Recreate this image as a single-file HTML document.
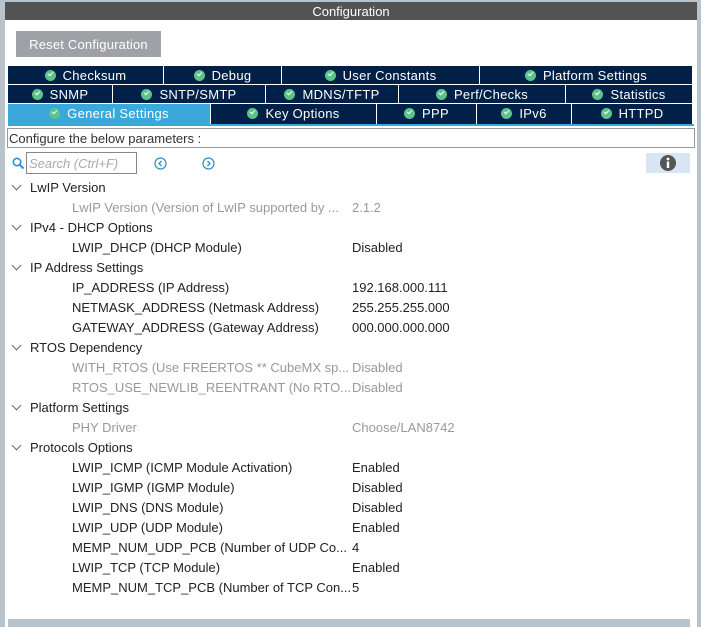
<!DOCTYPE html>
<html><head><style>
*{margin:0;padding:0;box-sizing:border-box}
body{width:701px;height:627px;background:#b9c3cb;position:relative;overflow:hidden;font-family:"Liberation Sans",Arial,sans-serif;font-size:13px;color:#222}
.abs{position:absolute}
#panel{left:5px;top:2px;width:692px;height:625px;background:#fff}
#title{left:5px;top:2px;width:692px;height:18px;background:#535353;color:#fff;text-align:center;line-height:19px;font-size:13px}
#reset{left:16px;top:31px;width:145px;height:26px;background:#9ea2a6;color:#fff;line-height:27px;text-align:center;font-size:13px;letter-spacing:0.2px}
.tab{position:absolute;background:#002047;color:#fff;text-align:center;font-size:13px;white-space:nowrap;letter-spacing:0.3px}
.tab.act{background:#3aa8db}
.ck{display:inline-block;width:11px;height:11px;border-radius:50%;background:#5bc48a;position:relative;vertical-align:-1px;margin-right:7px}
.ck:after{content:"";position:absolute;left:3px;top:2px;width:4px;height:2px;border-left:1.6px solid #fff;border-bottom:1.6px solid #fff;transform:rotate(-45deg)}
.row{position:absolute;height:20px;line-height:22px;white-space:nowrap}
.g{left:30px}
.l{left:72px}
.v{left:352px}
.d{color:#999}
.chev{position:absolute;left:13px;width:7px;height:7px;border-right:1px solid #666;border-bottom:1px solid #666;transform:rotate(45deg)}
</style></head><body>
<div class="abs" id="panel"></div>
<div class="abs" id="title">Configuration</div>
<div class="abs" id="reset">Reset Configuration</div>

<div class="tab" style="left:8px;top:66px;width:155px;height:18px;line-height:19px"><span class="ck"></span>Checksum</div>
<div class="tab" style="left:164px;top:66px;width:117px;height:18px;line-height:19px"><span class="ck"></span>Debug</div>
<div class="tab" style="left:282px;top:66px;width:197px;height:18px;line-height:19px"><span class="ck"></span>User Constants</div>
<div class="tab" style="left:480px;top:66px;width:212px;height:18px;line-height:19px"><span class="ck"></span>Platform Settings</div>

<div class="tab" style="left:8px;top:85px;width:104px;height:18px;line-height:19px"><span class="ck"></span>SNMP</div>
<div class="tab" style="left:113px;top:85px;width:152px;height:18px;line-height:19px"><span class="ck"></span>SNTP/SMTP</div>
<div class="tab" style="left:266px;top:85px;width:132px;height:18px;line-height:19px"><span class="ck"></span>MDNS/TFTP</div>
<div class="tab" style="left:399px;top:85px;width:166px;height:18px;line-height:19px"><span class="ck"></span>Perf/Checks</div>
<div class="tab" style="left:566px;top:85px;width:126px;height:18px;line-height:19px"><span class="ck"></span>Statistics</div>

<div class="tab act" style="left:8px;top:104px;width:202px;height:20px;line-height:20px"><span class="ck"></span>General Settings</div>
<div class="tab" style="left:211px;top:104px;width:165px;height:20px;line-height:20px"><span class="ck"></span>Key Options</div>
<div class="tab" style="left:377px;top:104px;width:99px;height:20px;line-height:20px"><span class="ck"></span>PPP</div>
<div class="tab" style="left:477px;top:104px;width:94px;height:20px;line-height:20px"><span class="ck"></span>IPv6</div>
<div class="tab" style="left:572px;top:104px;width:120px;height:20px;line-height:20px"><span class="ck"></span>HTTPD</div>
<div class="abs" style="left:8px;top:124px;width:686px;height:2px;background:#3aa8db"></div>

<div class="abs" style="left:7px;top:128px;width:688px;height:20px;border:1px solid #999;line-height:19px;padding-left:1px;color:#333">Configure the below parameters :</div>

<svg class="abs" style="left:12px;top:157px" width="13" height="13" viewBox="0 0 13 13"><circle cx="5" cy="5" r="3.7" fill="none" stroke="#2a8fd4" stroke-width="1.6"/><line x1="7.6" y1="7.6" x2="11.5" y2="11.5" stroke="#2a8fd4" stroke-width="2"/></svg>
<div class="abs" style="left:26px;top:152px;width:111px;height:22px;border:1px solid #888;line-height:21px;padding-left:2px;color:#aaa;font-style:italic">Search (Ctrl+F)</div>
<svg class="abs" style="left:154px;top:157px" width="13" height="13"><circle cx="6.5" cy="6.5" r="5.5" fill="none" stroke="#2a8fd4" stroke-width="1.2"/><path d="M7.5 4 L5 6.5 L7.5 9" fill="none" stroke="#2a8fd4" stroke-width="1.3"/></svg>
<div class="abs" style="left:646px;top:153px;width:44px;height:20px;background:#d8e6f3"></div>
<svg class="abs" style="left:202px;top:157px" width="13" height="13"><circle cx="6.5" cy="6.5" r="5.5" fill="none" stroke="#2a8fd4" stroke-width="1.2"/><path d="M5.5 4 L8 6.5 L5.5 9" fill="none" stroke="#2a8fd4" stroke-width="1.3"/></svg>
<svg class="abs" style="left:659px;top:154px" width="18" height="18"><circle cx="9" cy="9" r="8" fill="#555"/><circle cx="9" cy="5" r="1.4" fill="#fff"/><rect x="7.8" y="7.5" width="2.4" height="6.5" fill="#fff"/></svg>

<div class="row" style="left:0;top:177px;width:0"><span class="chev" style="top:5px"></span></div>
<div class="row g" style="top:177px">LwIP Version</div>
<div class="row l d" style="top:197px">LwIP Version (Version of LwIP supported by ...</div><div class="row v d" style="top:197px">2.1.2</div>
<div class="row" style="left:0;top:217px"><span class="chev" style="top:5px"></span></div>
<div class="row g" style="top:217px">IPv4 - DHCP Options</div>
<div class="row l" style="top:237px">LWIP_DHCP (DHCP Module)</div><div class="row v" style="top:237px">Disabled</div>
<div class="row" style="left:0;top:257px"><span class="chev" style="top:5px"></span></div>
<div class="row g" style="top:257px">IP Address Settings</div>
<div class="row l" style="top:277px">IP_ADDRESS (IP Address)</div><div class="row v" style="top:277px">192.168.000.111</div>
<div class="row l" style="top:297px">NETMASK_ADDRESS (Netmask Address)</div><div class="row v" style="top:297px">255.255.255.000</div>
<div class="row l" style="top:317px">GATEWAY_ADDRESS (Gateway Address)</div><div class="row v" style="top:317px">000.000.000.000</div>
<div class="row" style="left:0;top:337px"><span class="chev" style="top:5px"></span></div>
<div class="row g" style="top:337px">RTOS Dependency</div>
<div class="row l d" style="top:357px">WITH_RTOS (Use FREERTOS ** CubeMX sp...</div><div class="row v d" style="top:357px">Disabled</div>
<div class="row l d" style="top:377px">RTOS_USE_NEWLIB_REENTRANT (No RTO...</div><div class="row v d" style="top:377px">Disabled</div>
<div class="row" style="left:0;top:397px"><span class="chev" style="top:5px"></span></div>
<div class="row g" style="top:397px">Platform Settings</div>
<div class="row l d" style="top:417px">PHY Driver</div><div class="row v d" style="top:417px">Choose/LAN8742</div>
<div class="row" style="left:0;top:437px"><span class="chev" style="top:5px"></span></div>
<div class="row g" style="top:437px">Protocols Options</div>
<div class="row l" style="top:457px">LWIP_ICMP (ICMP Module Activation)</div><div class="row v" style="top:457px">Enabled</div>
<div class="row l" style="top:477px">LWIP_IGMP (IGMP Module)</div><div class="row v" style="top:477px">Disabled</div>
<div class="row l" style="top:497px">LWIP_DNS (DNS Module)</div><div class="row v" style="top:497px">Disabled</div>
<div class="row l" style="top:517px">LWIP_UDP (UDP Module)</div><div class="row v" style="top:517px">Enabled</div>
<div class="row l" style="top:537px">MEMP_NUM_UDP_PCB (Number of UDP Co...</div><div class="row v" style="top:537px">4</div>
<div class="row l" style="top:557px">LWIP_TCP (TCP Module)</div><div class="row v" style="top:557px">Enabled</div>
<div class="row l" style="top:577px">MEMP_NUM_TCP_PCB (Number of TCP Con...</div><div class="row v" style="top:577px">5</div>

<div class="abs" style="left:8px;top:619px;width:682px;height:8px;background:#b9c3cb"></div>
</body></html>
